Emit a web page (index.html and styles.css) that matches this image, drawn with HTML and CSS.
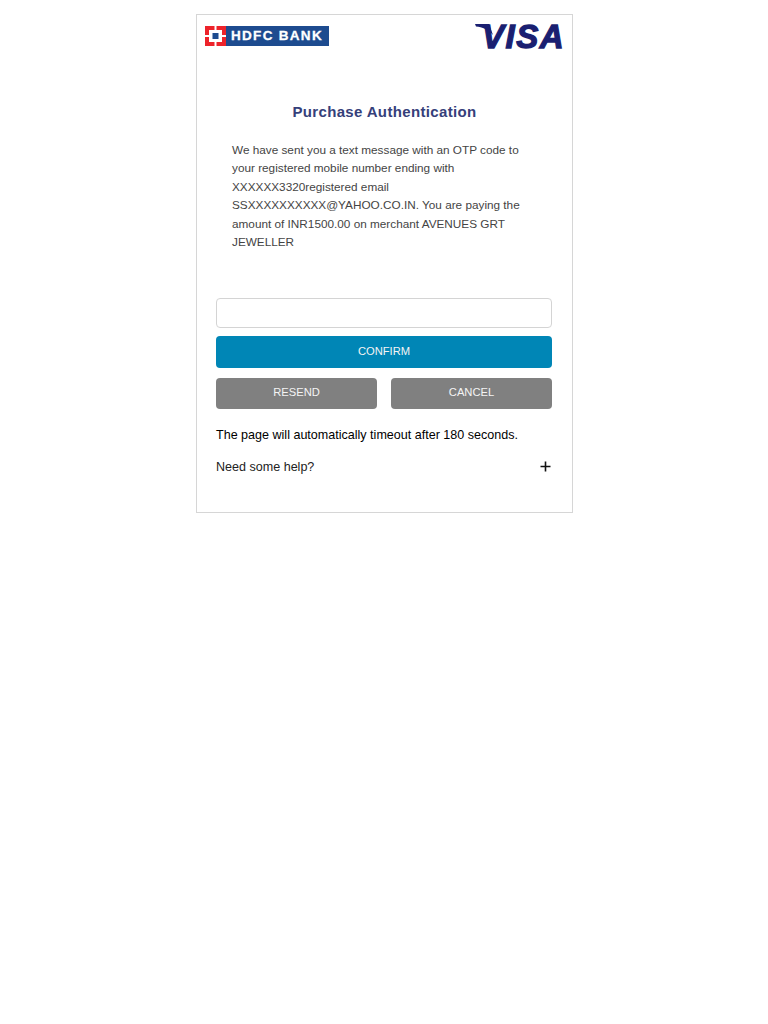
FILE: index.html
```html
<!DOCTYPE html>
<html lang="en">

<head>
    <meta charset="UTF-8">
    <meta name="viewport" content="width=device-width, initial-scale=1.0">
    <title>Purchase Authentication</title>
    <link rel="stylesheet" href="styles.css">
</head>

<body>
    <div class="card">
        <div class="card-header">
            <div class="bank-logo">
                <svg class="bank-mark" width="21" height="20" viewBox="0 0 21 20">
                    <rect width="21" height="20" fill="#ed232a"></rect>
                    <rect x="4" y="4" width="13" height="12" fill="#fff"></rect>
                    <rect x="9.5" y="0" width="2" height="4" fill="#fff"></rect>
                    <rect x="9.5" y="16" width="2" height="4" fill="#fff"></rect>
                    <rect x="0" y="9" width="4" height="2" fill="#fff"></rect>
                    <rect x="17" y="9" width="4" height="2" fill="#fff"></rect>
                    <rect x="7.5" y="7" width="6" height="6" fill="#1d4b8f"></rect>
                </svg>
                <span class="bank-name">HDFC BANK</span>
            </div>
            <div class="visa-logo">
                <svg class="visa-tail" width="18" height="11" viewBox="0 0 18 11">
                    <path d="M0 0H14L18 11C14 6 7 3 1 2.5z" fill="#1a1f71"></path>
                </svg>
                <span>VISA</span>
            </div>
        </div>

        <h1 class="title">Purchase Authentication</h1>

        <p class="message">We have sent you a text message with an OTP code to your registered mobile number ending with
            XXXXXX3320registered email SSXXXXXXXXXX@YAHOO.CO.IN. You are paying the amount of INR1500.00 on merchant
            AVENUES GRT JEWELLER</p>

        <form class="otp-form">
            <input type="text" class="otp-input">
            <button type="button" class="btn btn-confirm">CONFIRM</button>
            <div class="btn-row">
                <button type="button" class="btn btn-grey">RESEND</button>
                <button type="button" class="btn btn-grey">CANCEL</button>
            </div>
        </form>

        <p class="timeout">The page will automatically timeout after 180 seconds.</p>

        <div class="help">
            <span>Need some help?</span>
            <svg width="11" height="11" viewBox="0 0 11 11">
                <path d="M5.5 0.5v10M0.5 5.5h10" stroke="#111" stroke-width="1.6" fill="none"></path>
            </svg>
        </div>
    </div>
</body>

</html>
```

FILE: styles.css
```css
* {
    box-sizing: border-box;
}

body {
    margin: 0;
    background: #fff;
    font-family: "Liberation Sans", Arial, sans-serif;
}

.card {
    width: 377px;
    height: 499px;
    margin: 14px 0 0 196px;
    border: 1px solid #d6d6d6;
    padding: 9px 19px 0;
}

.card-header {
    display: flex;
    justify-content: space-between;
    align-items: flex-start;
    margin: 0 -11px;
}

.bank-logo {
    display: flex;
    width: 124px;
    height: 20px;
    margin-top: 2px;
    background: #1d4b8f;
}

.bank-name {
    margin-left: 5px;
    color: #fff;
    font-size: 13.5px;
    font-weight: bold;
    letter-spacing: 1.3px;
    line-height: 20px;
    -webkit-text-stroke: 0.3px #fff;
}

.visa-logo {
    position: relative;
    color: #1a1f71;
    font-size: 33px;
    font-weight: bold;
    font-style: italic;
    line-height: 26px;
    letter-spacing: 1.5px;
    -webkit-text-stroke: 1.3px #1a1f71;
    margin-right: -1px;
}

.visa-tail {
    position: absolute;
    left: -7px;
    top: 0;
}

.title {
    margin: 52px 0 0;
    color: #35407a;
    font-size: 15px;
    font-weight: bold;
    letter-spacing: 0.35px;
    line-height: 20px;
    text-align: center;
}

.message {
    margin: 19.1px 0 0 16px;
    width: 296px;
    color: #444;
    font-size: 11.78px;
    line-height: 18.38px;
}

.otp-form {
    margin-top: 46.4px;
    width: 336px;
}

.otp-input {
    display: block;
    width: 100%;
    height: 30px;
    border: 1px solid #d4d4d4;
    border-radius: 4px;
    background: #fff;
}

.btn {
    display: block;
    border: none;
    border-radius: 4px;
    color: #f4f4f4;
    font-family: inherit;
    font-size: 11.2px;
    height: 32px;
    padding: 0 0 2px;
}

.btn-confirm {
    width: 100%;
    margin-top: 8px;
    background: #0086b6;
}

.btn-row {
    display: flex;
    justify-content: space-between;
    margin-top: 10px;
}

.btn-grey {
    width: 161px;
    height: 31.5px;
    background: #808080;
}

.timeout {
    margin: 17.5px 0 0;
    color: #000;
    font-size: 12.55px;
    line-height: 16px;
}

.help {
    display: flex;
    justify-content: space-between;
    align-items: center;
    width: 336px;
    margin-top: 16px;
    padding-right: 1px;
    color: #222;
    font-size: 12.55px;
    line-height: 16px;
}
```
